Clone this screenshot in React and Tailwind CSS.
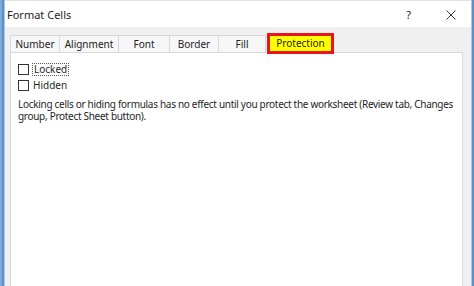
import React from "react";

function Tab({ label, w, first }) {
  return (
    <div
      className={`h-[17px] ${w} flex items-center justify-center border-t border-r border-[#d9d9d9] bg-[#f7f7f7] text-[10px] text-[#222] ${first ? "border-l" : ""}`}
    >
      {label}
    </div>
  );
}

function Checkbox() {
  return <div className="w-[11px] h-[11px] border border-[#333] bg-white shrink-0" />;
}

export default function App() {
  return (
    <div className="w-[474px] h-[286px] flex overflow-hidden font-['Noto_Sans',sans-serif] text-[#1e1e1e]">
      <div className="w-[5px] shrink-0 flex">
        <div className="w-[2px] bg-[#7eabd9]" />
        <div className="w-[2px] bg-[#5b91c9]" />
        <div className="w-[1px] bg-[#a9c8e8]" />
      </div>
      <div className="flex-1 min-w-0 flex flex-col">
        <div className="h-[27px] bg-white flex items-center pl-[2px] pr-[15px] border-t border-[#e3e3e3]">
          <span className="text-[11px] leading-none">Format Cells</span>
          <div className="flex-1" />
          <span className="text-[11px] leading-none mr-[35px]">?</span>
          <svg width="10" height="10" viewBox="0 0 10 10" className="mt-[1px]">
            <path d="M0.5 0.5 L9.5 9.5 M9.5 0.5 L0.5 9.5" stroke="#333" strokeWidth="1" fill="none" />
          </svg>
        </div>
        <div className="flex-1 min-h-0 bg-[#f0f0f0] pl-[5px] pr-[8px] pt-[8px] flex flex-col">
          <div className="h-[17px] flex relative z-10">
            <Tab label="Number" w="w-[50px]" first />
            <Tab label="Alignment" w="w-[59px]" />
            <Tab label="Font" w="w-[51px]" />
            <Tab label="Border" w="w-[49px]" />
            <Tab label="Fill" w="w-[47px]" />
            <div className="ml-[1px] w-[67px] h-[21px] -mt-[2px] self-start border-[3px] border-[#e8141a] bg-[#ffff00] flex items-center justify-center text-[10px] text-[#222]">
              Protection
            </div>
          </div>
          <div className="flex-1 min-w-0 overflow-hidden bg-white border border-b-0 border-[#d9d9d9] pl-[7px] pt-[10px] flex flex-col text-[10px]">
            <div className="h-[13px] flex items-center gap-[3px]">
              <Checkbox />
              <span className="border border-dotted border-[#555] px-[1px] leading-[11px]">Locked</span>
            </div>
            <div className="h-[13px] mt-[3px] flex items-center gap-[4px]">
              <Checkbox />
              <span className="leading-[11px]">Hidden</span>
            </div>
            <p className="mt-[6px] leading-[12px] whitespace-nowrap tracking-[-0.3px]">
              Locking cells or hiding formulas has no effect until you protect the worksheet (Review tab, Changes
              <br />
              group, Protect Sheet button).
            </p>
          </div>
        </div>
      </div>
      <div className="w-[3px] shrink-0 flex">
        <div className="w-[1px] bg-[#a9c8e8]" />
        <div className="w-[2px] bg-[#5b91c9]" />
      </div>
    </div>
  );
}
